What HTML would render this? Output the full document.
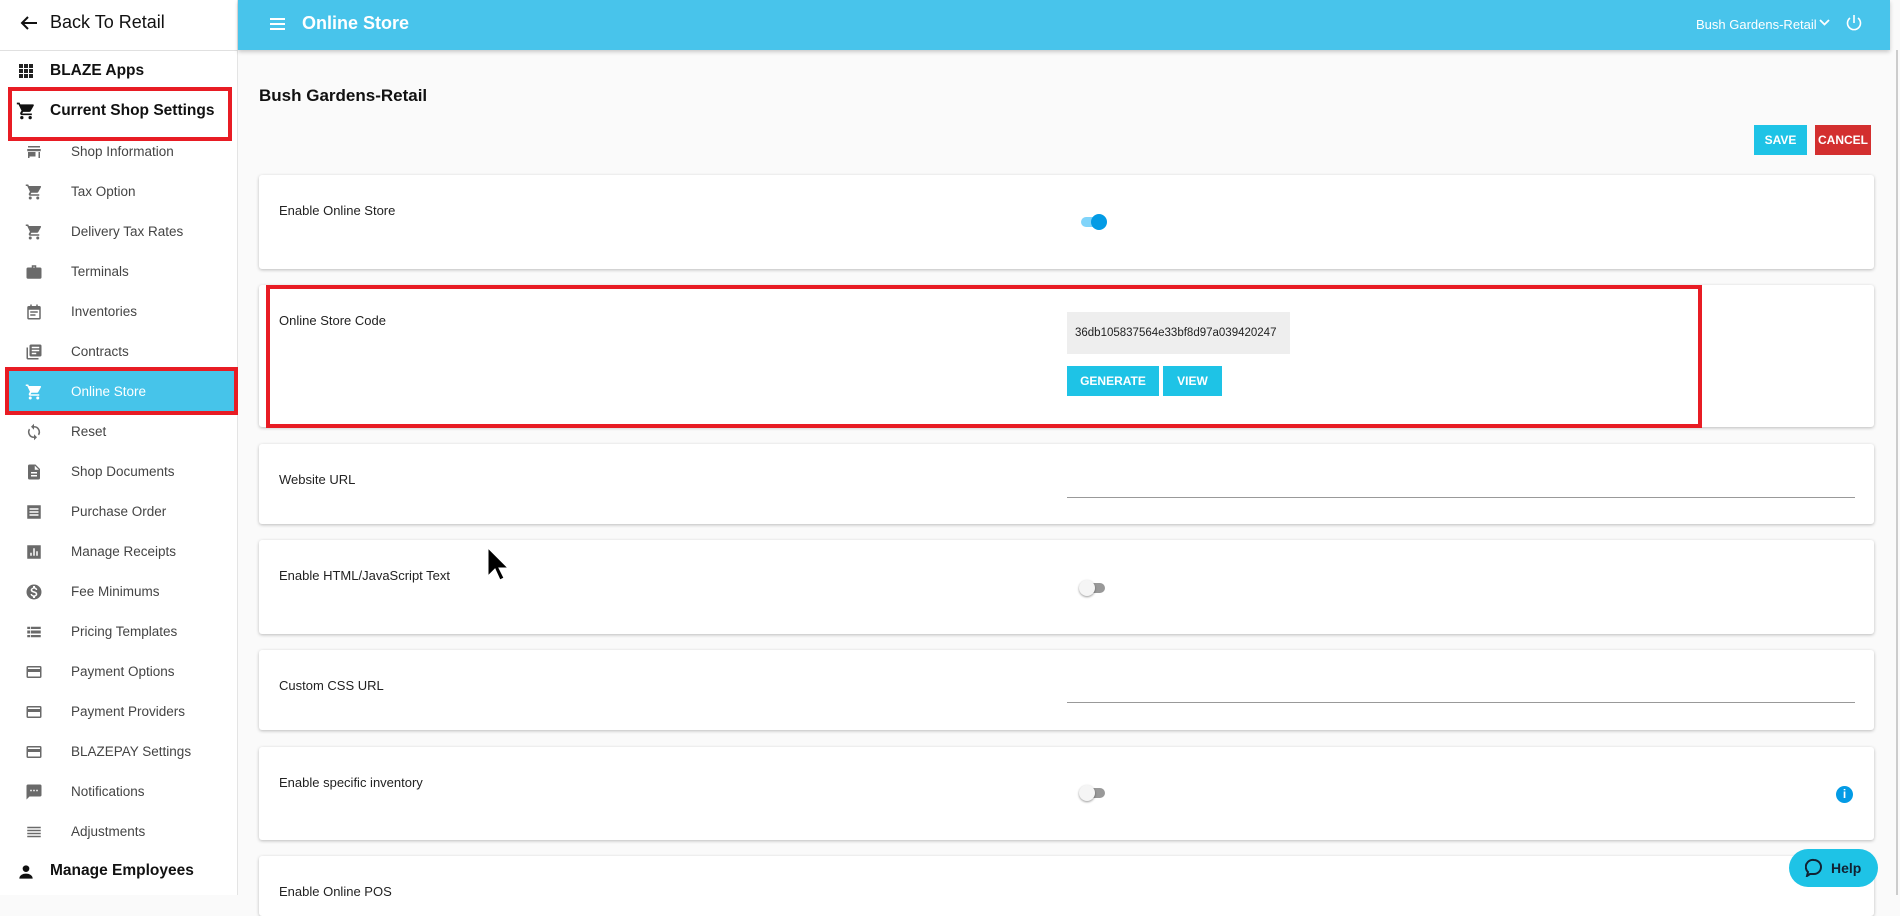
<!DOCTYPE html>
<html><head><meta charset="utf-8"><style>
*{margin:0;padding:0;box-sizing:border-box}
body{width:1900px;height:895px;overflow:hidden;background:#fafafa;font-family:"Liberation Sans",Arial,sans-serif;position:relative}
.a{position:absolute}
#side{left:0;top:0;width:238px;height:895px;background:#fff;border-right:1px solid #e4e4e4}
.h{font-size:15.5px;color:#111;font-weight:bold}
.s{font-size:13.5px;color:#444}
.card{position:absolute;left:259px;width:1615px;background:#fff;border-radius:3px;box-shadow:0 1px 3px rgba(0,0,0,.25)}
.lbl{position:absolute;left:20px;top:28px;font-size:13px;color:#222}
.line{position:absolute;left:808px;width:788px;height:1px;background:#999}
.tog{position:absolute;left:822px;width:24px;height:10px;border-radius:5px}
.knob{position:absolute;top:-3px;width:16px;height:16px;border-radius:50%}
.btn{position:absolute;background:#1ec3e6;color:#fff;font-size:12px;font-weight:bold;display:flex;align-items:center;justify-content:center}
</style></head><body>
<div id="side" class="a">
 <svg class="a" style="left:20px;top:15px" width="18" height="16" viewBox="0 0 18 16" fill="none" stroke="#111" stroke-width="2"><path d="M17 8H2M8 2L2 8l6 6"/></svg>
 <div class="a" style="left:50px;top:12px;font-size:18px;color:#111">Back To Retail</div>
 <div class="a" style="left:0;top:50px;width:238px;height:1px;background:#e0e0e0"></div>
 <svg class="a" style="left:18px;top:63px" width="16" height="16" viewBox="0 0 16 16" fill="#222"><rect x="1" y="1" width="4" height="4"/><rect x="6" y="1" width="4" height="4"/><rect x="11" y="1" width="4" height="4"/><rect x="1" y="6" width="4" height="4"/><rect x="6" y="6" width="4" height="4"/><rect x="11" y="6" width="4" height="4"/><rect x="1" y="11" width="4" height="4"/><rect x="6" y="11" width="4" height="4"/><rect x="11" y="11" width="4" height="4"/></svg>
 <div class="a h" style="left:50px;top:62px">BLAZE Apps</div>
 <div class="a" style="left:8px;top:87px;width:224px;height:54px;border:4px solid #e81c24"></div>
 <svg class="a" style="left:16px;top:101px" width="20" height="20" viewBox="0 0 24 24" fill="#111"><path d="M7 18a2 2 0 100 4 2 2 0 000-4zM1 2v2h2l3.6 7.6-1.4 2.4C4.5 15.4 5.5 17 7 17h12v-2H7.4l1.1-2h7.5c.8 0 1.4-.4 1.7-1l3.6-6.5A1 1 0 0020.4 4H5.2l-.9-2H1zm16 16a2 2 0 100 4 2 2 0 000-4z"/></svg>
 <div class="a h" style="left:50px;top:102px">Current Shop Settings</div>
 <div class="a" style="left:5px;top:367px;width:233px;height:48px;border:4px solid #e81c24;background:#46c4ea"></div>
 <div id="items"></div>
 <svg class="a" style="left:16px;top:862px" width="20" height="20" viewBox="0 0 24 24" fill="#111"><circle cx="12" cy="8" r="4"/><path d="M4 20c0-4 4-6 8-6s8 2 8 6z"/></svg>
 <div class="a h" style="left:50px;top:862px">Manage Employees</div>
</div>
<script>
var cart='<path d="M7 18a2 2 0 100 4 2 2 0 000-4zM1 2v2h2l3.6 7.6-1.4 2.4C4.5 15.4 5.5 17 7 17h12v-2H7.4l1.1-2h7.5c.8 0 1.4-.4 1.7-1l3.6-6.5A1 1 0 0020.4 4H5.2l-.9-2H1zm16 16a2 2 0 100 4 2 2 0 000-4z"/>';
var card='<path d="M20 4H4a2 2 0 00-2 2v12a2 2 0 002 2h16a2 2 0 002-2V6a2 2 0 00-2-2zm0 14H4v-6h16zm0-10H4V6h16z"/>';
var I={
"Shop Information":'<path d="M4 4h16v2H4zM3 8h18v3H3zM4 12h2v8H4zm14 0h2v8h-2zM6 12h8v6H6z"/>',
"Tax Option":cart,"Delivery Tax Rates":cart,"Online Store":cart,
"Terminals":'<path d="M9 3h6v3h5a2 2 0 012 2v11a2 2 0 01-2 2H4a2 2 0 01-2-2V8a2 2 0 012-2h5zm2 3h2V5h-2z"/>',
"Inventories":'<path d="M7 2h2v2h6V2h2v2h2a2 2 0 012 2v14a2 2 0 01-2 2H5a2 2 0 01-2-2V6a2 2 0 012-2h2zM5 9v11h14V9zm2 2h10v2H7zm0 4h7v2H7z"/>',
"Contracts":'<path d="M4 6H2v14a2 2 0 002 2h14v-2H4zm16-4H8a2 2 0 00-2 2v12a2 2 0 002 2h12a2 2 0 002-2V4a2 2 0 00-2-2zm-1 9H9V9h10zm-4 4H9v-2h6zm4-8H9V5h10z"/>',
"Reset":'<path d="M12 4V1L8 5l4 4V6a6 6 0 015.2 9l1.5 1.5A8 8 0 0012 4zm0 14a6 6 0 01-5.2-9L5.3 7.5A8 8 0 0012 20v3l4-4-4-4z"/>',
"Shop Documents":'<path d="M14 2H6a2 2 0 00-2 2v16a2 2 0 002 2h12a2 2 0 002-2V8zm2 16H8v-2h8zm0-4H8v-2h8zm-3-5V3.5L18.5 9z"/>',
"Purchase Order":'<path d="M3 3h18v18H3zm3 4v2h12V7zm0 4v2h12v-2zm0 4v2h12v-2z"/>',
"Manage Receipts":'<path d="M3 3h18v18H3zm4 10v4h2v-4zm4-6v10h2V7zm4 4v6h2v-6z"/>',
"Fee Minimums":'<path d="M12 2a10 10 0 100 20 10 10 0 000-20zm1.4 16.1V20h-2.7v-1.9c-1.7-.4-3.2-1.5-3.3-3.4h2c.1 1 .8 1.8 2.6 1.8 1.9 0 2.3-1 2.3-1.5 0-.8-.4-1.5-2.6-2-2.4-.6-4.1-1.6-4.1-3.6 0-1.7 1.4-2.8 3.1-3.2V4h2.7v1.9c1.9.5 2.8 1.9 2.9 3.4h-2c-.1-1.1-.6-1.8-2.2-1.8-1.5 0-2.4.7-2.4 1.6 0 .8.7 1.4 2.6 1.9s4.1 1.4 4.1 3.9c0 1.8-1.4 2.9-3 3.2z"/>',
"Pricing Templates":'<path d="M3 5h4v3H3zm0 5h4v4H3zm0 6h4v3H3zM8 5h13v3H8zm0 5h13v4H8zm0 6h13v3H8z"/>',
"Payment Options":card,"Payment Providers":card,"BLAZEPAY Settings":card,
"Notifications":'<path d="M20 2H4a2 2 0 00-2 2v18l4-4h14a2 2 0 002-2V4a2 2 0 00-2-2zM9 11H7V9h2zm4 0h-2V9h2zm4 0h-2V9h2z"/>',
"Adjustments":'<path d="M3 5h18v2H3zm0 4h18v2H3zm0 4h18v2H3zm0 4h18v2H3z"/>'};
var n=["Shop Information","Tax Option","Delivery Tax Rates","Terminals","Inventories","Contracts","Online Store","Reset","Shop Documents","Purchase Order","Manage Receipts","Fee Minimums","Pricing Templates","Payment Options","Payment Providers","BLAZEPAY Settings","Notifications","Adjustments"];
var h="";n.forEach(function(t,i){var y=152+i*40;var on=t=="Online Store";var c=on?"#fff":"#6a6a6a";
h+='<svg class="a" style="left:25px;top:'+(y-9)+'px" width="18" height="18" viewBox="0 0 24 24" fill="'+c+'">'+I[t]+'</svg><div class="a s" style="left:71px;top:'+(y-8)+'px;color:'+(on?"#fff":"#444")+'">'+t+'</div>';});
document.getElementById("items").innerHTML=h;
</script>
<div class="a" style="left:238px;top:0;width:1652px;height:50px;background:#48c4eb;box-shadow:0 2px 4px rgba(0,0,0,.2)"></div>
<div class="a" style="left:270px;top:18px;width:15px;height:2px;background:#fff;box-shadow:0 5px 0 #fff,0 10px 0 #fff"></div>
<div class="a" style="left:302px;top:13px;font-size:18px;color:#fff;font-weight:bold">Online Store</div>
<div class="a" style="left:1696px;top:17px;font-size:13px;color:#fff">Bush Gardens-Retail</div>
<svg class="a" style="left:1819px;top:19px" width="11" height="8" viewBox="0 0 11 8" fill="none" stroke="#fff" stroke-width="1.8"><path d="M1 1l4.5 4.5L10 1"/></svg>
<svg class="a" style="left:1844px;top:13px" width="20" height="20" viewBox="0 0 20 20" fill="none" stroke="#fff" stroke-width="1.6"><path d="M10 2v8M6 5a6.5 6.5 0 108 0"/></svg>
<div class="a" style="left:1896px;top:50px;width:2px;height:845px;background:#ccc"></div>
<div class="a" style="left:259px;top:86px;font-size:17px;font-weight:bold;color:#111">Bush Gardens-Retail</div>
<div class="btn" style="left:1754px;top:125px;width:53px;height:30px">SAVE</div>
<div class="btn" style="left:1815px;top:125px;width:56px;height:30px;background:#d32f2f">CANCEL</div>
<div class="card" style="top:175px;height:94px"><div class="lbl">Enable Online Store</div><div class="tog" style="top:42px;background:#80d4fa"><div class="knob" style="left:10px;background:#039be5"></div></div></div>
<div class="card" style="top:285px;height:142px"><div class="lbl">Online Store Code</div>
<div class="a" style="left:808px;top:27px;width:223px;height:42px;background:#eee;font-size:11.5px;color:#222;padding:15px 0 0 8px">36db105837564e33bf8d97a039420247</div>
<div class="btn" style="left:808px;top:81px;width:92px;height:30px">GENERATE</div>
<div class="btn" style="left:904px;top:81px;width:59px;height:30px">VIEW</div></div>
<div class="a" style="left:266px;top:285px;width:1436px;height:143px;border:4px solid #e81c24"></div>
<div class="card" style="top:444px;height:80px"><div class="lbl">Website URL</div><div class="line" style="top:53px"></div></div>
<div class="card" style="top:540px;height:94px"><div class="lbl">Enable HTML/JavaScript Text</div><div class="tog" style="top:43px;background:#999"><div class="knob" style="left:-2px;background:#f5f5f5;box-shadow:0 1px 2px rgba(0,0,0,.4)"></div></div></div>
<div class="card" style="top:650px;height:80px"><div class="lbl">Custom CSS URL</div><div class="line" style="top:52px"></div></div>
<div class="card" style="top:747px;height:93px"><div class="lbl">Enable specific inventory</div><div class="tog" style="top:41px;background:#999"><div class="knob" style="left:-2px;background:#f5f5f5;box-shadow:0 1px 2px rgba(0,0,0,.4)"></div></div>
<div class="a" style="left:1577px;top:39px;width:17px;height:17px;border-radius:50%;background:#039be5;color:#fff;font-size:12px;font-weight:bold;text-align:center;line-height:17px">i</div></div>
<div class="card" style="top:856px;height:60px"><div class="lbl">Enable Online POS</div></div>
<div class="a" style="left:1789px;top:849px;width:89px;height:38px;border-radius:19px;background:#1ec3e6;color:#123;font-size:14px;font-weight:bold;padding:11px 0 0 42px">Help</div>
<svg class="a" style="left:1805px;top:858px" width="18" height="19" viewBox="0 0 18 19" fill="none" stroke="#123" stroke-width="2"><path d="M9 2a7 7 0 110 14H5l-3 2 1-4A7 7 0 019 2z"/></svg>
<svg class="a" style="left:487px;top:547px" width="22" height="34" viewBox="0 0 22 34"><path d="M1 1v28l7-7 5 11 4-2-5-10h9z" fill="#000" stroke="#fff" stroke-width="1"/></svg>
</body></html>
